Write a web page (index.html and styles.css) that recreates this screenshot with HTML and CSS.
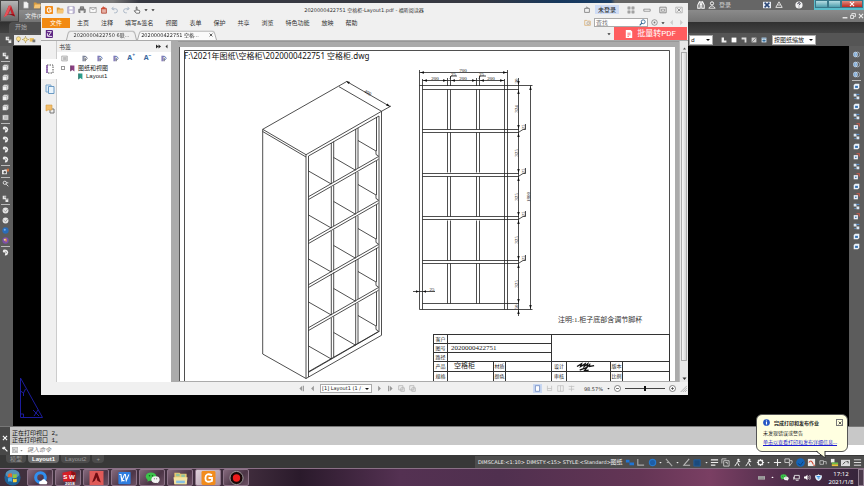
FILE: index.html
```html
<!DOCTYPE html>
<html lang="zh-CN">
<head>
<meta charset="utf-8">
<title>2020000422751 空格柜-Layout1.pdf</title>
<link rel="stylesheet" href="styles.css">
</head>
<body>
<svg class="defs" aria-hidden="true">
  <defs>
    <symbol id="doc" viewBox="0 0 10 10"><path d="M2 1h4l2 2v6H2z" fill="#f4f4f4" stroke="#999" stroke-width=".6"/></symbol>
    <symbol id="folder" viewBox="0 0 10 10"><path d="M1 2h3l1 1h4v6H1z" fill="#d99b3e"/><path d="M2.500 4.500H10L8.500 9H1z" fill="#f6c676"/></symbol>
    <symbol id="save" viewBox="0 0 10 10"><path d="M1 1h8v8H1z" fill="#c9c3dd" stroke="#9a93b8"/><path d="M3 1h4v3H3zM3 6h4v3H3z" fill="#fff"/></symbol>
    <symbol id="print" viewBox="0 0 10 10"><path d="M1 4h8v4H1zM3 1h4v3H3z" fill="#999" stroke="#666"/><path d="M3 6h4v3H3z" fill="#eee"/></symbol>
    <symbol id="mail" viewBox="0 0 10 10"><path d="M1 2h8v6H1zl4 3 4-3" fill="#fff" stroke="#888" stroke-width=".8"/></symbol>
    <symbol id="newpdf" viewBox="0 0 10 10"><path d="M2 3h6v6H2z" fill="#e6b1a6" stroke="#b0402c"/><path d="M4 0l1 2 2-1-1 2 2 1H3L1 3l2-1z" fill="#d24b31"/></symbol>
    <symbol id="undo" viewBox="0 0 10 10"><path d="M3 1L1 3.500 4 5M1.500 3.500h4a2.500 2.500 0 010 5H4" fill="none" stroke="#a9b6c6" stroke-width="1.200"/></symbol>
    <symbol id="hand" viewBox="0 0 10 10"><path d="M4 6V1.500q1-1 1 0V5l3 .5q1 .5 0 3.500H4L1.500 6q1-1 2.500 1" fill="#fff" stroke="#444" stroke-width=".9"/></symbol>
    <symbol id="down" viewBox="0 0 10 10"><path d="M1 3h8L5 8z" fill="currentColor"/></symbol>
    <symbol id="left" viewBox="0 0 10 10"><path d="M7 1v8L3 5z" fill="currentColor"/></symbol>
    <symbol id="right" viewBox="0 0 10 10"><path d="M3 1v8l4-4z" fill="currentColor"/></symbol>
    <symbol id="first" viewBox="0 0 10 10"><path d="M6 1v8L2 5zM7 1h1.500v8H7z" fill="currentColor"/></symbol>
    <symbol id="last" viewBox="0 0 10 10"><path d="M4 1v8l4-4zM1.500 1H3v8H1.500z" fill="currentColor"/></symbol>
    <symbol id="search" viewBox="0 0 10 10"><circle cx="6" cy="4" r="2.800" fill="none" stroke="currentColor" stroke-width="1.200"/><path d="M4 6L1 9" stroke="currentColor" stroke-width="1.600"/></symbol>
    <symbol id="gear" viewBox="0 0 10 10"><circle cx="5" cy="5" r="2.500" fill="none" stroke="currentColor" stroke-width="1.400"/><path d="M5 1v2M5 7v2M1 5h2M7 5h2M2.200 2.200l1 1M6.800 6.800l1 1M7.800 2.200l-1 1M3.200 6.800l-1 1" stroke="currentColor" stroke-width="1.200"/></symbol>
    <symbol id="dot" viewBox="0 0 10 10"><circle cx="5" cy="5" r="4" fill="none" stroke="#777"/><circle cx="5" cy="5" r="1.300" fill="#777"/></symbol>
    <symbol id="gridic" viewBox="0 0 10 10"><path d="M1 1h3v3H1zM6 1h3v3H6zM1 6h3v3H1zM6 6h3v3H6z" fill="#aaa" stroke="#888" stroke-width=".5"/></symbol>
    <symbol id="minw" viewBox="0 0 10 10"><path d="M1 4h8v2.500H1z" fill="#fff" stroke="#777" stroke-width=".9"/></symbol>
    <symbol id="maxw" viewBox="0 0 10 10"><path d="M1 1.500h8v7H1z" fill="none" stroke="#777"/><path d="M3 4h4v2.500H3z" fill="none" stroke="#777" stroke-width=".8"/></symbol>
    <symbol id="closew" viewBox="0 0 10 10"><path d="M1 1.500h8v7H1z" fill="none" stroke="#999" stroke-width=".8"/><path d="M3 3l4 4M7 3L3 7" stroke="#777"/></symbol>
    <symbol id="x" viewBox="0 0 10 10"><path d="M1.500 1.500l7 7M8.500 1.500l-7 7" stroke="currentColor" stroke-width="1.800"/></symbol>
    <symbol id="tag" viewBox="0 0 10 10"><path d="M2 1h3v8H2z" fill="#8d93a6"/><path d="M4 2h3l2 3-2 2H5" fill="none" stroke="#5a6480" stroke-width="1.200"/><path d="M6 4v5" stroke="#777" stroke-width="1.500"/></symbol>
    <symbol id="tagv" viewBox="0 0 10 10"><path d="M2 1h3v8H2z" fill="#8a80bb"/><path d="M4 2h3l2 3-2 2H5" fill="none" stroke="#4f6bb0" stroke-width="1.200"/><path d="M6 4v5" stroke="#777" stroke-width="1.500"/></symbol>
    <symbol id="list" viewBox="0 0 10 10"><path d="M1 1.500h8v7H1z" fill="#eee" stroke="#888" stroke-width=".8"/><path d="M3 3.500h5M3 5h5M3 6.500h5" stroke="#888" stroke-width=".7"/></symbol>
    <symbol id="ribbon" viewBox="0 0 10 10"><path d="M2 0h7v10L5.500 7.500 2 10z" fill="currentColor"/><path d="M2 0h2v9L2 10z" fill="#333" opacity=".35"/></symbol>
    <symbol id="sheets" viewBox="0 0 10 10"><path d="M1 1h5v7H1z" fill="#dcebf7" stroke="#7ba6cb"/><path d="M3.500 2.500h5.500v7H3.500z" fill="#e9f4fc" stroke="#6b9ac4"/></symbol>
    <symbol id="notes" viewBox="0 0 10 10"><path d="M5 5h4v4H5z" fill="#eee" stroke="#777"/><path d="M1 1h6v5H3L1 7z" fill="#f3bd69" stroke="#d19a45" stroke-width=".6"/></symbol>
    <symbol id="camera" viewBox="0 0 10 10"><path d="M0 3h3l1-1h3v7H0z" fill="#e4e4e4"/><circle cx="4" cy="6" r="1.700" fill="#555"/><path d="M7 1h3v4H7z" fill="#d4703a"/></symbol>
    <symbol id="pages" viewBox="0 0 10 10"><path d="M2 1h6v8H2z" fill="#fff" stroke="#555" stroke-dasharray="1.500 1"/><path d="M2 1v8" stroke="#8457a8" stroke-width="1.500"/></symbol>
    <symbol id="fox" viewBox="0 0 10 10"><path d="M1 0h8l1 1v8l-1 1H1z" fill="#5d2583"/><path d="M3 2h5L4 8h5M3 4v4" fill="none" stroke="#fff" stroke-width="1.100"/></symbol>
    <symbol id="g" viewBox="0 0 10 10"><rect width="10" height="10" rx="1" fill="#f28c1c"/><path d="M7.500 3Q3 1 2.800 5T7.500 7V5H5" fill="none" stroke="#fff" stroke-width="1.300"/></symbol>
    <symbol id="cube" viewBox="0 0 10 10"><path d="M3 1h6v6L7 9H1V3z" fill="#f0f0f0"/><path d="M1 3h6v6M7 3l2-2" fill="none" stroke="#777" stroke-width=".8"/></symbol>
    <symbol id="ball" viewBox="0 0 10 10"><path d="M2 1q6-1 7 4-1 5-5 4l1-4H2Q0 3 2 1z" fill="#eee"/><path d="M5 3l2 3" stroke="#777"/></symbol>
    <symbol id="disc" viewBox="0 0 10 10"><circle cx="5" cy="5" r="4.200" fill="#e6e6e6"/><path d="M2 4l3 3 3-4" fill="none" stroke="#888"/></symbol>
    <symbol id="pick" viewBox="0 0 10 10"><path d="M1 1h5v4h3v5H5V6H1z" fill="#e9e9e9"/><path d="M3 3h4v4" fill="none" stroke="#555"/></symbol>
    <symbol id="lens" viewBox="0 0 10 10"><circle cx="4" cy="4" r="2.300" fill="none" stroke="#ddd" stroke-width="1.400"/><path d="M6 6l3 3M6 4h3" stroke="#ddd" stroke-width="1.400"/></symbol>
    <symbol id="rings" viewBox="0 0 10 10"><ellipse cx="3.500" cy="5" rx="3" ry="3.500" fill="#7fa9d3" stroke="#e3eefa" stroke-width=".8"/><ellipse cx="6.500" cy="5" rx="3" ry="3.500" fill="none" stroke="#cfe3f7" stroke-width=".8"/></symbol>
    <symbol id="bcube" viewBox="0 0 10 10"><path d="M3 1h6v6L7 9H1V3z" fill="#eaf2fa"/><path d="M3 4h4v3H3z" fill="#3573b5"/></symbol>
    <symbol id="bpick" viewBox="0 0 10 10"><path d="M1 1h4v4H1zM5 5h4v4H5z" fill="#d9e8f7"/><path d="M5 2h4M2 8h2" stroke="#5b9be0" stroke-width="1.400"/></symbol>
    <symbol id="rcube" viewBox="0 0 10 10"><path d="M1 3h6v6H1z" fill="#e9eef5"/><path d="M5 1h4v4" fill="none" stroke="#cf5a4b" stroke-width="1.500"/><path d="M3 5h2v2H3z" fill="#3c79ba"/></symbol>
    <symbol id="man" viewBox="0 0 10 10"><circle cx="6" cy="2" r="1.300" fill="#eee"/><path d="M2 9l2-3 1-2h3M5 5l2 4" fill="none" stroke="#eee" stroke-width="1.100"/></symbol>
    <symbol id="plus" viewBox="0 0 10 10"><path d="M5 1v8M1 5h8" stroke="currentColor" stroke-width="1.200"/></symbol>
    <symbol id="wechat" viewBox="0 0 20 16"><ellipse cx="8" cy="6" rx="7" ry="5.500" fill="#3cc44a"/><path d="M4 10l-1 3 4-2z" fill="#3cc44a"/><ellipse cx="14" cy="10" rx="5.500" ry="4.500" fill="#f2f2f2"/><path d="M17 13l1 2-3-1z" fill="#f2f2f2"/><circle cx="6" cy="5" r="1" fill="#175d20"/><circle cx="10" cy="5" r="1" fill="#175d20"/><circle cx="12.500" cy="9" r=".8" fill="#666"/><circle cx="15.500" cy="9" r=".8" fill="#666"/></symbol>
    <symbol id="aletter" viewBox="0 0 16 16"><path d="M1 15L7 1h3l5 13-4-2-2-6-3 6z" fill="#c3242c"/><path d="M7 1l3 0-2 5-3 7-4 2z" fill="#e8535a"/><path d="M4 11l9 0 2 3-6-2z" fill="#8f1119"/></symbol>
  </defs>
</svg>

<main class="cad">
  <header class="cad-top">
    <button class="cad-logo" aria-label="应用程序"><svg><use href="#aletter"/></svg></button>
    <div class="cad-rows">
      <div class="cad-title">
        <div class="quick"><svg><use href="#doc"/></svg><svg><use href="#folder"/></svg></div>
        <div class="cad-info">
          <svg viewBox="0 0 10 10"><path d="M1 9V5l2-4h1v8zM6 9V1h1l2 4v4zM4 4h2" fill="none" stroke="#fff" stroke-width="1.300"/></svg>
          <svg viewBox="0 0 10 10"><circle cx="5" cy="3" r="2" fill="none" stroke="#fff" stroke-width="1.200"/><path d="M1 9q4-6 8 0z" fill="none" stroke="#fff"/></svg>
          <span>登录</span>
        </div>
        <div class="cad-help">
          <svg viewBox="0 0 10 10"><path d="M0 1h10v8H0z" fill="#e9edf5"/><path d="M2 2l6 6M8 2L2 8" stroke="#2b4877" stroke-width="2"/></svg>
          <svg viewBox="0 0 10 10"><path d="M5 1L1 8h8zM3 5h4" fill="none" stroke="#e4e4e4" stroke-width="1.200"/></svg>
          <svg viewBox="0 0 10 10"><circle cx="5" cy="5" r="4.500" fill="#f5f5f5"/><path d="M3.500 4q0-2 1.500-2t1.500 1.500L5 5.500M5 7v1" fill="none" stroke="#334" stroke-width="1.200"/></svg>
        </div>
        <div class="cad-wins">
          <button aria-label="最小化"></button><button aria-label="最大化"></button><button class="shut" aria-label="关闭"><svg><use href="#x"/></svg></button>
        </div>
      </div>
      <div class="cad-menu"><a href="#">文件(F)</a>
        <span class="mdi"><svg viewBox="0 0 10 10"><path d="M1 8h8" stroke="#fff" stroke-width="2"/></svg><svg viewBox="0 0 10 10"><path d="M3 3V1h6v5H7M1 4h5v5H1z" fill="none" stroke="#fff" stroke-width="1.300"/></svg><svg><use href="#x"/></svg></span>
      </div>
    </div>
  </header>
  <nav class="cad-tabs"><a href="#">开始</a></nav>
  <div class="cad-tools">
    <div class="layer-tools"><svg><use href="#pick"/></svg>
      <span class="layer-box"><svg viewBox="0 0 10 10"><circle cx="5" cy="4" r="3" fill="#ffe28a" stroke="#9a8440" stroke-width=".7"/><path d="M4 8h2" stroke="#555" stroke-width="1.500"/></svg><svg viewBox="0 0 10 10"><circle cx="5" cy="5" r="2.500" fill="#fff1ad" stroke="#a88a3a"/><path d="M5 0v1.500M5 8.500V10M0 5h1.500M8.500 5H10" stroke="#a88a3a"/></svg><svg viewBox="0 0 10 10"><path d="M1 3h6v5H1z" fill="#e9bc59"/><path d="M5 5h4v4H5z" fill="#777"/></svg></span>
    </div>
    <div class="view-tools">
      <label class="pick dim"><select aria-label="样式"><option>d</option></select></label>
      <span class="vp"><svg viewBox="0 0 10 10"><path d="M1 1h4v8H1zM5 6h4v3H5z" fill="#eee"/></svg><svg viewBox="0 0 10 10"><path d="M1 1h8v8H1z" fill="#fff"/></svg><svg viewBox="0 0 10 10"><path d="M1 1h8v8H6V4H1z" fill="#ddd"/></svg><svg viewBox="0 0 10 10"><path d="M1 1h8v8H1z" fill="#ccc"/><path d="M2 8l6-6" stroke="#555"/></svg><svg viewBox="0 0 10 10"><path d="M1 1h8v8H1z" fill="#d5e4ef"/><path d="M3 5h4v2H3zM1 2h8" fill="#356f9c" stroke="#356f9c"/></svg></span>
      <label class="pick zoomfit"><select aria-label="视口比例"><option>按图纸缩放</option></select></label>
    </div>
  </div>
  <section class="work">
    <aside class="rail rail-left">
      <svg><use href="#pick"/></svg><hr><svg><use href="#cube"/></svg><svg><use href="#cube"/></svg><svg><use href="#cube"/></svg><svg><use href="#cube"/></svg><svg><use href="#cube"/></svg><svg><use href="#list"/></svg><hr><svg><use href="#ball"/></svg><svg><use href="#ball"/></svg><svg><use href="#ball"/></svg><svg><use href="#ball"/></svg><hr><svg><use href="#camera"/></svg><hr><svg><use href="#lens"/></svg><svg class="apart"><use href="#pick"/></svg><hr><svg><use href="#disc"/></svg><svg><use href="#disc"/></svg><svg viewBox="0 0 10 10"><circle cx="5" cy="5" r="4.500" fill="#2a6cb8"/><circle cx="4" cy="4" r="1.500" fill="#76aee8"/></svg><svg viewBox="0 0 10 10"><circle cx="5" cy="5" r="4.500" fill="#7b4fae"/><path d="M5 1a4 4 0 010 7z" fill="#df7a4b"/><circle cx="4" cy="4" r="1.500" fill="#f1dc84"/></svg><hr><svg><use href="#ball"/></svg>
    </aside>
    <div class="canvas">
      <svg class="ucs" viewBox="0 0 25 42"><path d="M1.500 1v39.500h22zM1.500 37h3v3.500M1.500 14l3 2 2-4M4.500 16v3M14 33l6 6M19 33l-4 6" fill="none" stroke="#1c1c9c" stroke-width="1"/></svg>
    </div>
    <aside class="rail rail-right">
      <svg><use href="#rings"/></svg><svg><use href="#rings"/></svg><svg><use href="#rings"/></svg><hr><svg><use href="#bcube"/></svg><svg><use href="#bpick"/></svg><svg><use href="#bcube"/></svg><svg><use href="#bpick"/></svg><svg><use href="#rcube"/></svg><svg><use href="#bpick"/></svg><svg><use href="#bcube"/></svg><svg><use href="#rcube"/></svg><svg><use href="#bpick"/></svg><svg><use href="#rcube"/></svg><svg><use href="#bcube"/></svg><svg><use href="#rcube"/></svg><svg><use href="#bpick"/></svg><svg><use href="#rcube"/></svg><svg><use href="#bpick"/></svg><svg><use href="#bcube"/></svg><svg><use href="#bcube"/></svg>
    </aside>
  </section>
  <section class="command">
    <div class="grip"><svg><use href="#x"/></svg><svg viewBox="0 0 10 10"><path d="M4 4l5 5" stroke="#fff" stroke-width="2"/><path d="M1 2l2 0 0-2 3 3-3 3-3-2z" fill="#fff"/></svg></div>
    <div class="console">
      <div class="history"><p>正在打印视口 2。</p><p>正在打印视口 1。</p></div>
      <div class="prompt"><svg viewBox="0 0 10 10"><path d="M0 1h10v8H0z" fill="#ddd" stroke="#999"/><path d="M2 3l2 2-2 2M5 7h3" fill="none" stroke="#777"/></svg><svg class="tiny"><use href="#down"/></svg><input aria-label="命令" placeholder="键入命令"></div>
    </div>
  </section>
  <footer class="status">
    <nav class="layouts"><a href="#">模型</a><a href="#" class="on">Layout1</a><a href="#">Layout2</a><a href="#">+</a></nav>
    <div class="modes">
      <span class="dimtext">DIMSCALE:&lt;1:10&gt; DIMSTY:&lt;15&gt; STYLE:&lt;Standard&gt;</span>
      <span class="paper">图纸</span>
      <svg viewBox="0 0 10 10"><path d="M1 2h4v3H1zM5 5h5v3H5z" fill="#1f74d6"/></svg>
      <svg viewBox="0 0 10 10"><path d="M2 1v7h7" fill="none" stroke="#aaa" stroke-width="1.300"/></svg>
      <svg viewBox="0 0 10 10"><circle cx="5" cy="5" r="3.500" fill="#1d5ea8" stroke="#2678cc" stroke-width="1.300"/></svg><svg class="tiny"><use href="#down"/></svg>
      <svg viewBox="0 0 10 10"><path d="M1 1l7 8M2 5h2" fill="none" stroke="#aaa" stroke-width="1.200"/></svg><svg class="tiny"><use href="#down"/></svg>
      <svg viewBox="0 0 10 10"><path d="M8 1L2 8h7" fill="none" stroke="#bbb" stroke-width="1.200"/></svg>
      <svg viewBox="0 0 10 10"><path d="M1 2h7v7H1z" fill="#1b4a7c" stroke="#235f9c"/></svg><svg class="tiny"><use href="#down"/></svg>
      <svg viewBox="0 0 10 10"><path d="M1 2h8M1 5h8M1 8h5" stroke="#eee" stroke-width="1.300"/></svg>
      <svg viewBox="0 0 10 10"><path d="M1 1h5M3 3h6v6H3zM1 1v5M5 5h2v2" fill="none" stroke="#ccc"/></svg>
      <svg><use href="#man"/></svg><svg><use href="#man"/></svg>
      <svg><use href="#gear"/></svg><svg class="tiny"><use href="#down"/></svg>
      <svg><use href="#plus"/></svg>
      <svg viewBox="0 0 10 10"><path d="M1 1h5v4H1zM6 3h3v2l-3 4V5" fill="none" stroke="#ccc"/></svg>
      <svg viewBox="0 0 10 10"><circle cx="5" cy="5" r="4.800" fill="#1464b8"/><path d="M2 6l3 2 3-4" fill="none" stroke="#0b3e78"/></svg>
      <svg viewBox="0 0 10 10"><path d="M1 1h8v8H1z" fill="#eee"/><path d="M2 5q3-4 5 2M7 8h2" fill="none" stroke="#d0442e" stroke-width="1.200"/></svg>
      <svg viewBox="0 0 10 10"><path d="M1 3h4v4H1zM5 4h3v3" fill="none" stroke="#bbb"/></svg>
      <svg viewBox="0 0 10 10"><path d="M1 1h4v4H1z" fill="#eee"/><path d="M2 5h7v2H2z" fill="#6cc04a"/><path d="M2 7h7v2H2z" fill="#e8c43a"/></svg>
      <svg viewBox="0 0 10 10"><path d="M0 2h10v7H0z" fill="#ddd"/><path d="M2 7l3-3M6 4h2v2" fill="none" stroke="#444"/></svg>
      <svg viewBox="0 0 10 10"><path d="M1 2h8M1 5h8M1 8h8" stroke="#ddd" stroke-width="1.100"/></svg>
    </div>
  </footer>
</main>

<footer class="taskbar">
  <button class="start" aria-label="开始"><svg viewBox="0 0 20 20"><circle cx="10" cy="10" r="9.500" fill="#1f6196"/><ellipse cx="10" cy="6" rx="8" ry="5" fill="#6ca4c4" opacity=".7"/><path d="M5 6q2-1.500 4.500-.5V9.500Q7 8.500 4.500 10z" fill="#e7662c"/><path d="M10.500 6q2 1 4.500 0v4q-2 1.500-4.500.5z" fill="#8cc63e"/><path d="M4.500 11q2-1 5 0v4q-2.500-1-4.500 0z" fill="#4aa7e8"/><path d="M10.500 11.500q2 1 4.500 0V15q-2 1-4.500.5z" fill="#f9cf3a"/></svg></button>
  <div class="apps">
    <button aria-label="QQ浏览器"><svg viewBox="0 0 16 16"><circle cx="8" cy="7.500" r="5.500" fill="none" stroke="#2f8ff0" stroke-width="3.500"/><path d="M7 15q-2-3 2-4 3-3 5 0 3 1 1 4z" fill="#fff"/></svg></button>
    <button aria-label="SolidWorks 2018"><svg viewBox="0 0 16 16"><path d="M1 2l10-2 5 2v10H2z" fill="#d61f26"/><path d="M11 0l5 2v10l-4-1z" fill="#8f0d12"/><text x="2" y="9" class="sw">S W</text><text x="4" y="16" class="yr">2018</text></svg></button>
    <button aria-label="AutoCAD"><svg viewBox="0 0 16 16"><path d="M0 0h16v16H0z" fill="#e05a58"/><path d="M3 13L7 2h2l4 11-4-2-1-4-2 4z" fill="#700d12"/></svg></button>
    <button aria-label="WPS"><svg viewBox="0 0 16 16"><rect x="1" y="1" width="14" height="14" rx="1" fill="#2e7de0"/><path d="M2 4h2l1 7 3-7h1l1 7 3-7M4 6l1 5h3" fill="none" stroke="#fff" stroke-width="1.200"/></svg></button>
    <button aria-label="微信"><svg viewBox="0 0 20 16"><use href="#wechat"/></svg></button>
    <button aria-label="文件夹"><svg viewBox="0 0 16 16"><path d="M1 2h6l1 1h7v12H1z" fill="#e5c66f"/><path d="M3 3h4v3H3zM9 4h4v3H9z" fill="#8fc3a0"/><path d="M0 7h16l-1 8H1z" fill="#f5e3a1"/><path d="M3 11h10v3H3z" fill="#86c0e4"/></svg></button>
    <button class="on" aria-label="福昕阅读器"><svg><use href="#g"/></svg></button>
    <button aria-label="录屏"><svg viewBox="0 0 16 16"><circle cx="8" cy="8" r="7.500" fill="#180808" stroke="#a9a9a9"/><circle cx="8" cy="8" r="4.200" fill="#ee1c1c"/></svg></button>
  </div>
  <div class="tray">
    <svg viewBox="0 0 10 10"><path d="M0 3h10v5H0z" fill="#aaa"/><path d="M1 4.500h8M1 6.500h8" stroke="#666" stroke-width=".8" stroke-dasharray="1 .6"/></svg>
    <svg class="tiny" viewBox="0 0 10 10"><path d="M1 7h8L5 2z" fill="#fff"/></svg>
    <svg class="wide"><use href="#wechat"/></svg>
    <svg viewBox="0 0 10 10"><path d="M2 2h7v5H2zM4 9h4M1 4v4" fill="none" stroke="#eee" stroke-width="1.200"/></svg>
    <svg viewBox="0 0 10 10"><path d="M0 3.500h2L5 1v8L2 6.500H0z" fill="#fff"/><path d="M6.500 3q1.500 2 0 4M8 1.500q3 3.500 0 7" fill="none" stroke="#ddd"/></svg>
    <svg viewBox="0 0 10 10"><path d="M0 2q5 0 5-2 0 2 5 2 0 6-5 8-5-2-5-8z" fill="#e5f2fd"/><path d="M2 3h6q-1 4-3 5-2-1-3-5z" fill="#3790e4"/><path d="M3 5l2 1 2-2" fill="none" stroke="#fff"/></svg>
    <time>17:12<br>2021/1/8</time>
    <button class="desk" aria-label="显示桌面"></button>
  </div>
</footer>

<section class="reader" aria-label="福昕阅读器">
  <header class="r-title">
    <div class="r-quick"><svg class="gicon"><use href="#g"/></svg><svg><use href="#folder"/></svg><svg><use href="#save"/></svg><svg><use href="#print"/></svg><svg><use href="#mail"/></svg><svg><use href="#newpdf"/></svg><svg><use href="#undo"/></svg><svg class="flip"><use href="#undo"/></svg><svg><use href="#hand"/></svg><svg class="tiny"><use href="#down"/></svg><svg class="tiny"><use href="#down"/></svg></div>
    <h1>2020000422751 空格柜-Layout1.pdf - 福昕阅读器</h1>
    <div class="r-wins"><svg viewBox="0 0 10 10"><path d="M2 3h6v5H2zM3 3l2-2 2 2" fill="none" stroke="#777"/></svg><button class="login">未登录</button><svg><use href="#gridic"/></svg><svg><use href="#minw"/></svg><svg><use href="#maxw"/></svg><svg><use href="#closew"/></svg></div>
  </header>
  <nav class="r-menu">
    <button class="file">文件</button>
    <a href="#">主页</a><a href="#">注释</a><a href="#">填写&amp;签名</a><a href="#">视图</a><a href="#">表单</a><a href="#">保护</a><a href="#">共享</a><a href="#">浏览</a><a href="#">特色功能</a><a href="#">放映</a><a href="#">帮助</a>
    <div class="find"><svg viewBox="0 0 10 10"><path d="M1 2h3l1 1h4v6H1z" fill="none" stroke="#d9a765"/><circle cx="6" cy="6" r="2" fill="#f3e3cc" stroke="#aaa"/></svg><label class="box"><input aria-label="查找" placeholder="查找"><svg><use href="#search"/></svg></label><svg><use href="#dot"/></svg><svg class="tiny"><use href="#down"/></svg><svg class="pale"><use href="#left"/></svg><svg class="pale"><use href="#right"/></svg></div>
  </nav>
  <div class="r-tabs">
    <svg class="brand"><use href="#fox"/></svg>
    <button class="tab">2020000422750 6联...</button>
    <button class="tab on">2020000422751 空格...<svg><use href="#x"/></svg></button>
    <svg class="more"><use href="#down"/></svg>
    <button class="convert"><svg viewBox="0 0 10 10"><path d="M1 0h6l2 2v8H1z" fill="#fff"/><path d="M3 4h4M3 6h4M3 8h2" stroke="#ff5a5f"/></svg>批量转PDF</button>
  </div>
  <div class="r-body">
    <aside class="side">
      <button class="on" aria-label="页面"><svg><use href="#pages"/></svg></button>
      <button aria-label="页面缩略图"><svg><use href="#sheets"/></svg></button>
      <button aria-label="注释"><svg><use href="#notes"/></svg></button>
    </aside>
    <section class="marks">
      <header><span>书签</span><svg viewBox="0 0 10 10"><path d="M0 1l5 4-5 4zM5 1l5 4-5 4z" fill="#222"/></svg><svg><use href="#left"/></svg></header>
      <div class="mk-tools"><svg class="first"><use href="#list"/></svg><svg><use href="#tag"/></svg><svg><use href="#tagv"/></svg><svg><use href="#tagv"/></svg><b>A<sup>+</sup></b><b>A<sup>−</sup></b><svg><use href="#tagv"/></svg></div>
      <ul class="tree">
        <li><span class="row"><i></i><svg class="purple"><use href="#ribbon"/></svg>图纸和视图</span>
          <ul><li><span class="row"><svg class="teal"><use href="#ribbon"/></svg>Layout1</span></li></ul></li>
      </ul>
    </section>
    <div class="split"></div>
    <div class="view">
      <article class="sheet">
        <svg class="drawing" width="494" height="335" viewBox="180 47 494 335">
          <defs>
            <g id="bay">
              <path d="M308.500 196.700L378.500 156.500M331.300 143v40.500M333.700 141.500v40.500M355.700 129v40.500M358 128v40M308.500 171l22.800 13M333.700 157.500l22 12.800M358 140.500l18 10.500v3.500l2.500 1.500M376.500 117v34"/>
            </g>
            <g id="shelf"><path d="M308.500 199.500L378.500 159.300"/></g>
            <g id="fbay"><path d="M447.500 89.500v40M450.500 89.500v40M476.500 89.500v40M479.500 89.500v40"/></g>
            <g id="fshelf"><path d="M422.500 129.500H519M422.500 132.500H519M519 132l4-2.500h2.500v-5.500"/></g>
          </defs>
          <g class="ink">
            <path class="frame" d="M184.500 400V50.500H669.500V400"/>
            <path d="M262.700 129.300L346.700 81.500M262.700 129.300L306 154.700L381.500 111.300L339 86.700M262.700 131.500L306 157M346.700 81.500L390 106.500M381.500 111.300L391 106M262.700 129.300V354L306 378.500L381.500 335.300V111.300M306 154.700V378.500M308.500 156V377M308.500 156L379 116V332M308.500 372.300L379 331.500"/>
            <use href="#bay"/><use href="#bay" y="44"/><use href="#bay" y="88"/><use href="#bay" y="131"/><use href="#bay" y="175"/>
            <use href="#shelf"/><use href="#shelf" y="44"/><use href="#shelf" y="88"/><use href="#shelf" y="131"/>
            <path d="M419.500 70V309.500M422.500 79V309.500M504.500 79V309.500M507.500 70V309.500M419.500 85.500H532.500M422.500 89.500H519M419.500 309.500H532.500M422.500 303.500H519"/>
            <use href="#fbay"/><use href="#fbay" y="43"/><use href="#fbay" y="87"/><use href="#fbay" y="131"/><use href="#fbay" y="174"/>
            <use href="#fshelf"/><use href="#fshelf" y="44"/><use href="#fshelf" y="87"/><use href="#fshelf" y="131"/>
            <path d="M419.500 72.500h88M422.500 80.500h82M447.500 78v8M450.500 76v10M476.500 78v8M479.500 76v10M450 79l1-3h6M479 79l1-3h6M518.500 78V316M530.500 85.500V309.500M413 291.500h22"/>
          </g>
          <path class="arrows" d="M420 72.500l4-1.200v2.400zM507 72.500l-4-1.200v2.400zM423 80.500l4-1.200v2.400zM447 80.500l-4-1.200v2.400zM451 80.500l4-1.200v2.400zM476 80.500l-4-1.200v2.400zM480 80.500l4-1.200v2.400zM504 80.500l-4-1.200v2.400zM530.500 86l-1.200 4h2.400zM530.500 309l-1.200-4h2.400zM518.500 85l-1.200-4h2.400zM518.500 90l-1.200 4h2.400zM518.500 129l-1.200-4h2.400zM518.500 133l-1.200 4h2.400zM518.500 173l-1.200-4h2.400zM518.500 177l-1.200 4h2.400zM518.500 216l-1.200-4h2.400zM518.500 220l-1.200 4h2.400zM518.500 260l-1.200-4h2.400zM518.500 264l-1.200 4h2.400zM518.500 303l-1.200-4h2.400zM518.500 310l-1.200 4h2.400zM419 291.500l-3-1.200v2.400zM423 291.500l3-1.200v2.400zM346 81l4 1-1.500 2zM390 106.500l-4-1 1.500-2z"/>
          <g class="dims">
            <text x="463" y="72">700</text><text x="435" y="80">200</text><text x="463" y="80">200</text><text x="491" y="80">200</text><text x="453.500" y="76">25</text><text x="481.500" y="76">25</text><text x="432" y="291">25</text>
            <text transform="translate(367 94) rotate(30)">400</text>
            <text transform="translate(518 81) rotate(-90)">30</text><text transform="translate(518 109) rotate(-90)">324</text><text transform="translate(518 153) rotate(-90)">325</text><text transform="translate(518 197) rotate(-90)">325</text><text transform="translate(518 240) rotate(-90)">325</text><text transform="translate(518 284) rotate(-90)">325</text><text transform="translate(518 307) rotate(-90)">50</text><text transform="translate(530 197) rotate(-90)">1800</text>
            <text transform="translate(525 127) rotate(-90)">25</text><text transform="translate(525 171) rotate(-90)">25</text><text transform="translate(525 214) rotate(-90)">25</text><text transform="translate(525 258) rotate(-90)">25</text>
          </g>
          <text class="path" x="184" y="59">F:\2021年图纸\空格柜\2020000422751 空格柜.dwg</text>
          <text class="note" x="558" y="322">注明:1.柜子底部含调节脚杯</text>
        </svg>
        <table class="stamp">
          <colgroup><col class="c14"><col class="c46"><col class="c12"><col class="c46"><col class="c15"><col class="c44"><col class="c12"><col class="c47"></colgroup>
          <tr><th>客户</th><td colspan="3"></td><td colspan="4" rowspan="3"></td></tr>
          <tr><th>图号</th><td colspan="3" class="val">2020000422751</td></tr>
          <tr><th>路径</th><td colspan="3"></td></tr>
          <tr><th>产品</th><td class="val mid">空格柜</td><th>材质</th><td></td><th>设计</th><td class="sign"><svg viewBox="0 0 22 10"><path d="M1 5l5-3-1 3 5-3-1 3 4-3-1 4 3-3 0 2 5-1M4 9l8-3-3 4 5-1" fill="none" stroke="#111" stroke-width="1.500"/></svg></td><th>版本</th><td></td></tr>
          <tr><th>规格</th><td></td><th>颜色</th><td></td><th>审核</th><td></td><th>比例</th><td></td></tr>
        </table>
      </article>
    </div>
    <div class="scroll"><svg viewBox="0 0 10 10"><path d="M2 7h6L5 3z" fill="#555"/></svg><div class="thumb"></div><svg><use href="#down"/></svg></div>
  </div>
  <footer class="r-status">
    <div class="pager"><button aria-label="第一页"><svg><use href="#first"/></svg></button><button aria-label="上一页"><svg><use href="#left"/></svg></button><label class="pick page"><select aria-label="页码"><option>[1] Layout1 (1 / 1)</option></select></label><button aria-label="下一页"><svg><use href="#right"/></svg></button><button aria-label="最后一页"><svg><use href="#last"/></svg></button><button aria-label="后退"><svg viewBox="0 0 10 10"><path d="M1 1h6v6H1zM4 4h5v5H4z" fill="#f2f2f2" stroke="#aaa"/></svg></button><button aria-label="前进"><svg viewBox="0 0 10 10"><path d="M1 1h6v6H1zM4 4h5v5H4z" fill="#f2f2f2" stroke="#aaa"/></svg></button></div>
    <div class="zoom"><span class="modeon"><svg viewBox="0 0 10 10"><path d="M2 1h6v8H2z" fill="#fff" stroke="#5a79b8"/></svg></span><svg viewBox="0 0 10 10"><path d="M2 1v7h6V1M2 5h6" fill="none" stroke="#bbb"/></svg><svg viewBox="0 0 10 10"><path d="M1 1h8v8H1zM5 1v8" fill="none" stroke="#bbb"/></svg><svg viewBox="0 0 10 10"><path d="M1 2h8M1 6h8M5 1v8" fill="none" stroke="#bbb"/></svg><output>98.57%</output><svg class="tiny"><use href="#down"/></svg><button aria-label="缩小"><svg viewBox="0 0 10 10"><circle cx="5" cy="5" r="4.300" fill="#fff" stroke="#555"/><path d="M3 5h4" stroke="#333"/></svg></button><input type="range" aria-label="缩放" min="0" max="100" value="49"><button aria-label="放大"><svg viewBox="0 0 10 10"><circle cx="5" cy="5" r="4.300" fill="#fff" stroke="#555"/><path d="M3 5h4M5 3v4" stroke="#333"/></svg></button><svg class="corner" viewBox="0 0 10 10"><path d="M1 10l9-9M4 10l6-6M7 10l3-3" stroke="#999"/></svg></div>
  </footer>
</section>

<aside class="balloon" role="status">
  <header><svg viewBox="0 0 10 10"><circle cx="5" cy="5" r="4.800" fill="#2456c4"/><path d="M5 2v1.400M5 4.300V8" stroke="#fff" stroke-width="1.600"/></svg><strong>完成打印和发布作业</strong><button aria-label="关闭"><svg><use href="#x"/></svg></button></header>
  <p>未发现错误或警告</p>
  <a href="#">单击以查看打印和发布详细信息...</a>
  <svg class="tail" viewBox="0 0 12 9"><path d="M1 0l9 8V0z" fill="#ffffe1"/><path d="M1 1l9 7V1" fill="none" stroke="#333"/></svg>
</aside>
</body>
</html>
```
FILE: styles.css
```css
* { box-sizing: border-box; }
body {
  margin: 0;
  position: relative;
  height: 100vh;
  overflow: hidden;
  display: flex;
  flex-direction: column;
  background: #000;
  color: #333;
  font: 6px/8px "Noto Sans", "Noto Sans CJK SC", sans-serif;
}
svg { display: block; width: 8px; height: 8px; flex: none; }
svg.tiny { width: 4px; height: 4px; }
.defs { position: absolute; width: 0; height: 0; }
button, input, select { font: inherit; color: inherit; border: 0; padding: 0; margin: 0; background: none; min-width: 0; }
a { color: inherit; text-decoration: none; }
p, h1, ul { margin: 0; padding: 0; }
ul { list-style: none; }

.pick { position: relative; display: block; background: #fff; border: 1px solid #aaa; height: 10px; }
.pick select { display: block; appearance: none; width: 100%; height: 8px; line-height: 8px; padding-left: 1px; color: #222; border-radius: 0; overflow: hidden; }
.pick::after { content: ""; position: absolute; right: 2px; top: 3px; border: 2px solid transparent; border-top-color: #111; }

/* drafting application */
.cad { flex: 1; min-height: 0; display: flex; flex-direction: column; }
.cad-top { display: flex; height: 22px; background: linear-gradient(#646464, #8b8b8b 45%, #747474); }
.cad-logo { width: 19px; background: linear-gradient(#b5b5b5, #666); display: grid; place-items: center; border: 1px solid #444; }
.cad-logo svg { width: 13px; height: 15px; }
.cad-rows { flex: 1; display: flex; flex-direction: column; }
.cad-title { display: flex; height: 10px; align-items: center; background: linear-gradient(90deg, #777 94px, #373942 120px, #373942 460px, #17385d 540px, #1d3f66 592px, #666 596px, #666); }
.quick { display: flex; gap: 3px; margin-left: 3px; flex: 1; }
.cad-info { display: flex; gap: 3px; align-items: center; color: #ccc; width: 66px; }
.cad-help { display: flex; gap: 4px; width: 51px; }
.cad-help svg:last-child { margin-left: 8px; }
.cad-wins { display: flex; height: 10px; width: 50px; padding: 0 1px; background: #5bbcca; }
.cad-wins button { width: 13px; height: 8px; background: linear-gradient(#b4dce2, #4f9fae); border: 1px solid #39788a; }
.cad-wins .shut { width: 22px; background: linear-gradient(#e28b7e, #bd2a20); color: #fff; display: grid; place-items: center; }
.cad-wins .shut svg, .mdi svg { width: 6px; height: 6px; }
.cad-menu { display: flex; justify-content: space-between; align-items: center; height: 12px; padding: 0 0 0 6px; color: #eee; }
.mdi { display: flex; gap: 2px; }
.cad-tabs { height: 11px; background: linear-gradient(#303030, #424242); display: flex; }
.cad-tabs a { margin-left: 9px; width: 40px; padding: 1px 6px; background: #505050; border-radius: 4px 4px 0 0; color: #aaa; }
.cad-tools { height: 13px; background: #555; display: flex; justify-content: space-between; align-items: center; }
.layer-tools, .layer-box, .vp, .view-tools { display: flex; align-items: center; gap: 2px; }
.layer-tools { padding-left: 5px; }
.layer-box { background: #e8e8e8; height: 10px; width: 30px; padding-left: 1px; gap: 0; }
.layer-tools > svg, .layer-box svg { width: 7px; height: 7px; }
.view-tools { padding-right: 48px; gap: 4px; }
.dim { width: 24px; }
.zoomfit { width: 44px; }
.vp { gap: 4px; padding: 0 1px 0 4px; }
.vp svg { width: 6px; height: 6px; }
.work { flex: 1; min-height: 0; display: flex; }
.canvas { flex: 1; display: flex; align-items: flex-end; padding: 0 0 7px 6px; background: #000; }
.ucs { width: 25px; height: 42px; }
.rail { background: #5c5c5c; display: flex; flex-direction: column; align-items: center; gap: 3px; }
.rail svg { width: 7px; height: 7px; }
.rail hr { width: 9px; height: 1px; border: 0; background: #bbb; margin: -1px 0; }
.rail-left { width: 13px; padding: 6px 3px 0 0; }
.rail-left .apart { margin-top: 5px; }
.rail-right { width: 15px; padding-top: 5px; }

.command { display: flex; height: 29px; border-top: 1px solid #777; }
.grip { width: 10px; background: #484848; color: #fff; padding: 8px 2px 0; display: flex; flex-direction: column; gap: 5px; }
.grip svg { width: 6px; height: 6px; }
.console { flex: 1; display: flex; flex-direction: column; }
.history { flex: 1; background: #c8c8c8; padding: 3px 2px 0; color: #111; font-family: "Liberation Mono", "Noto Sans CJK SC", monospace; line-height: 7px; }
.prompt { height: 10px; background: #fff; display: flex; align-items: center; gap: 2px; padding-left: 2px; color: #888; }
.prompt svg { width: 6px; height: 6px; }
.prompt svg.tiny { width: 3px; height: 3px; }
.prompt input { flex: 1; padding-left: 2px; height: 8px; }
.prompt input::placeholder { color: #777; font-style: italic; }
.status { height: 13px; background: #383838; display: flex; justify-content: space-between; align-items: flex-start; color: #999; }
.layouts { display: flex; padding-left: 6px; gap: 2px; font-family: "Liberation Sans", "Noto Sans CJK SC", sans-serif; }
.layouts a { height: 8px; padding: 0 4px; background: #4c4c4c; border-radius: 0 0 4px 4px; }
.layouts .on { background: #6e6e6e; color: #fff; font-weight: bold; }
.modes { display: flex; align-items: center; justify-content: space-between; height: 12px; width: 389px; margin-top: 1px; padding: 0 2px 0 3px; background: #4d4d4d; color: #eee; }
.modes .dimtext { font: 5px/8px "DejaVu Sans", sans-serif; width: 130px; white-space: nowrap; }
.modes svg.tiny { width: 3px; height: 3px; }
.modes svg { width: 9px; height: 9px; }

/* desktop taskbar */
.taskbar { height: 18px; display: flex; align-items: center; border-top: 1px solid #8a6f86; background: linear-gradient(90deg, #40303d, #3f2c3c 248px, #2a1a2b 300px, #543152 400px, #50304f 500px, #643555 640px, #7a3f63 710px, #4c2c49 790px, #35243a); }
.start { width: 24px; display: grid; place-items: center; }
.start svg { width: 17px; height: 17px; }
.apps { display: flex; gap: 2px; padding-left: 3px; flex: 1; }
.apps button { width: 26px; height: 17px; display: grid; place-items: center; border: 1px solid #8d7488; border-radius: 2px; background: linear-gradient(135deg, #84697c, #4c3546 60%, #6c5063); }
.apps .on { background: linear-gradient(135deg, #ded2da, #a78fa0); }
.apps svg { width: 15px; height: 14px; }
.sw { font: bold 7px "Liberation Sans", sans-serif; fill: #fff; }
.yr { font: bold 5px "Liberation Sans", sans-serif; fill: #fff; }
.tray { display: flex; align-items: center; gap: 4px; color: #fff; }
.tray svg { width: 7px; height: 7px; }
.tray svg.tiny { width: 3px; height: 3px; margin: 0 2px; }
.tray svg.wide { width: 9px; }
.tray time { text-align: center; width: 26px; margin-left: 2px; line-height: 8px; }
.desk { width: 6px; height: 17px; border: 1px solid #8d7b8d; background: #4b3a4c; }

/* document reader window */
.reader { position: absolute; left: 41px; right: 176px; top: 3px; bottom: 91px; display: flex; flex-direction: column; background: #f0f0f0; }
.r-title { height: 13px; display: flex; align-items: center; justify-content: space-between; }
.r-quick { display: flex; align-items: center; gap: 3px; padding-left: 4px; flex: 1; }
.r-title h1 { font: 5px/8px "DejaVu Sans", "Noto Sans CJK SC", sans-serif; }
.flip { transform: scaleX(-1); }
.r-wins { flex: 1; display: flex; justify-content: flex-end; align-items: center; gap: 8px; padding-right: 5px; }
.login { background: #cfdcf5; width: 24px; height: 9px; color: #222; margin-left: -4px; }
.r-menu { height: 13px; display: flex; align-items: center; gap: 12px; }
.file { width: 28px; height: 10px; background: #f28a12; color: #fff; margin: 0 -5px 0 1px; }
.find { margin-left: auto; display: flex; align-items: center; gap: 3px; padding-right: 3px; }
.find > svg { width: 7px; height: 7px; }
.find > svg.tiny { width: 4px; height: 4px; }
.find .box { display: flex; align-items: center; width: 54px; height: 9px; border: 1px solid #aaa; background: #fff; padding: 0 1px; color: #28608f; }
.find input { flex: 1; width: 20px; height: 7px; }
.find input::placeholder { color: #777; }
.find .box svg { width: 7px; height: 7px; }
.pale { color: #ccc; }
.r-tabs { height: 12px; display: flex; align-items: flex-end; border-bottom: 1px solid #aaa; font: 5px/8px "DejaVu Sans", "Noto Sans CJK SC", sans-serif; }
.brand { margin: 0 13px 2px 4px; }
.tab { position: relative; isolation: isolate; display: flex; align-items: center; justify-content: center; width: 71px; height: 10px; white-space: nowrap; }
.tab::before { content: ""; position: absolute; z-index: -1; inset: 0; border: 1px solid #aaa; border-bottom: 0; border-radius: 3px 3px 0 0; transform: perspective(20px) rotateX(8deg); transform-origin: bottom; }
.tab.on { width: 80px; gap: 10px; color: #222; }
.tab.on::before { background: #fafafa; }
.tab.on svg { width: 4px; height: 4px; }
.more { width: 4px; height: 4px; margin: 0 3px 4px auto; }
.convert { width: 73px; height: 13px; margin: 0 1px 0 0; background: #ff5d5f; color: #fff; display: flex; justify-content: center; align-items: center; gap: 4px; font: 8px/12px Roboto, "Noto Sans CJK SC", sans-serif; white-space: nowrap; }

.r-body { flex: 1; min-height: 0; display: flex; }
.side { width: 16px; border-right: 1px solid #ccc; padding-top: 18px; }
.side button { display: grid; place-items: center; width: 17px; height: 20px; }
.side .on { background: #fff; }
.side svg { width: 10px; height: 10px; }
.marks { width: 114px; background: #fff; }
.marks header { height: 11px; background: #f0f0f0; display: flex; align-items: center; gap: 3px; padding: 0 2px; }
.marks header span { flex: 1; }
.marks header svg { width: 5px; height: 5px; }
.mk-tools { display: flex; align-items: center; justify-content: space-between; height: 12px; padding: 0 4px; }
.mk-tools svg { width: 7px; height: 7px; }
.mk-tools .first { margin-right: 4px; }
.mk-tools b { color: #39699f; font: bold 7px/8px "Noto Sans", sans-serif; }
.mk-tools sup { font-size: 5px; line-height: 1px; }
.tree { color: #222; padding-left: 4px; }
.tree ul { padding-left: 16px; }
.row { display: flex; align-items: center; gap: 4px; height: 8px; }
.row i { width: 4px; height: 4px; border: 1px solid #999; }
.tree ul .row { font-family: "Liberation Sans", sans-serif; }
.row svg { width: 6px; height: 7px; margin-right: -1px; }
.purple { color: #8c3f83; }
.teal { color: #2b9c8a; }
.split { width: 7px; background: #ababab; }
.view { flex: 1; min-width: 0; background: #ababab; padding: 6px 4px 0 1px; border-top: 1px solid #999; overflow: hidden; }
.sheet { position: relative; height: 100%; background: #fff; border-left: 1px solid #555; overflow: hidden; margin-top: -1px; }
.drawing { width: 494px; height: 335px; }
.ink { fill: none; stroke: #222; stroke-width: 0.800; }
.frame { stroke: #222; }
.arrows { fill: #111; }
.dims text { font: 5px "Liberation Serif", serif; text-anchor: middle; fill: #111; }
.path { font: 8px "Noto Sans", "Noto Sans CJK SC", sans-serif; fill: #111; }
.note { font: 7px "Liberation Serif", "Noto Sans CJK SC", serif; fill: #333; }
.stamp { position: absolute; left: 253px; top: 287px; width: 237px; table-layout: fixed; border-collapse: collapse; font: 5px/7px "Liberation Serif", "Noto Sans CJK SC", serif; color: #222; }
.stamp th, .stamp td { border: 1px solid #333; padding: 0; font-weight: normal; text-align: center; height: 9px; white-space: nowrap; }
.stamp .val { font-size: 7px; text-align: left; padding-left: 3px; }
.stamp .mid { padding-left: 6px; }
.stamp .sign svg { width: 22px; height: 9px; margin-left: 8px; }
.stamp tr:nth-child(n+4) th { height: 10px; }
.c12 { width: 12px; } .c14 { width: 14px; } .c15 { width: 15px; } .c44 { width: 44px; } .c46 { width: 46px; } .c47 { width: 47px; }
.scroll { width: 9px; background: #e8e8e8; border-left: 1px solid #bbb; display: flex; flex-direction: column; align-items: center; padding: 5px 0 1px; gap: 1px; }
.scroll svg { width: 5px; height: 5px; }
.thumb { flex: 1; width: 6px; margin-bottom: 14px; border: 1px solid #aaa; background: linear-gradient(90deg, #f6f6f6, #d4d4d4); }

.r-status { height: 13px; display: flex; align-items: center; padding: 0 1px 0 257px; justify-content: space-between; font: 5px/8px "DejaVu Sans", "Noto Sans CJK SC", sans-serif; }
.pager, .zoom { display: flex; align-items: center; gap: 4px; }
.pager button { color: #999; }
.pager svg { width: 7px; height: 7px; }
.page { width: 52px; height: 9px; }
.page select { height: 7px; line-height: 7px; padding-right: 8px; }
.zoom svg { width: 7px; height: 7px; }
.zoom svg.tiny { width: 3px; height: 3px; }
.modeon { background: #c9d8f2; padding: 1px; }
.zoom output { margin-left: 5px; }
.zoom input { appearance: none; width: 40px; height: 8px; background: linear-gradient(#444, #444) center / 100% 1px no-repeat; }
.zoom input::-webkit-slider-thumb { appearance: none; width: 2px; height: 5px; background: #111; }

/* plot notification */
.balloon { position: absolute; right: 16px; bottom: 34px; width: 92px; height: 38px; padding: 3px 4px 3px 6px; background: #ffffe1; border: 1px solid #555; border-radius: 6px; color: #222; }
.balloon header { display: flex; align-items: center; gap: 4px; height: 9px; margin-bottom: 2px; }
.balloon header svg { width: 7px; height: 7px; }
.balloon strong { flex: 1; font-size: 5px; white-space: nowrap; }
.balloon button { width: 7px; height: 7px; border: 1px solid #777; display: grid; place-items: center; }
.balloon header button svg { width: 4px; height: 4px; }
.balloon p { font-size: 5px; height: 9px; }
.balloon a { display: block; font-size: 5px; color: #1a1ad0; text-decoration: underline; white-space: nowrap; }
.balloon .tail { position: absolute; right: 20px; top: 35px; width: 12px; height: 9px; }
```
